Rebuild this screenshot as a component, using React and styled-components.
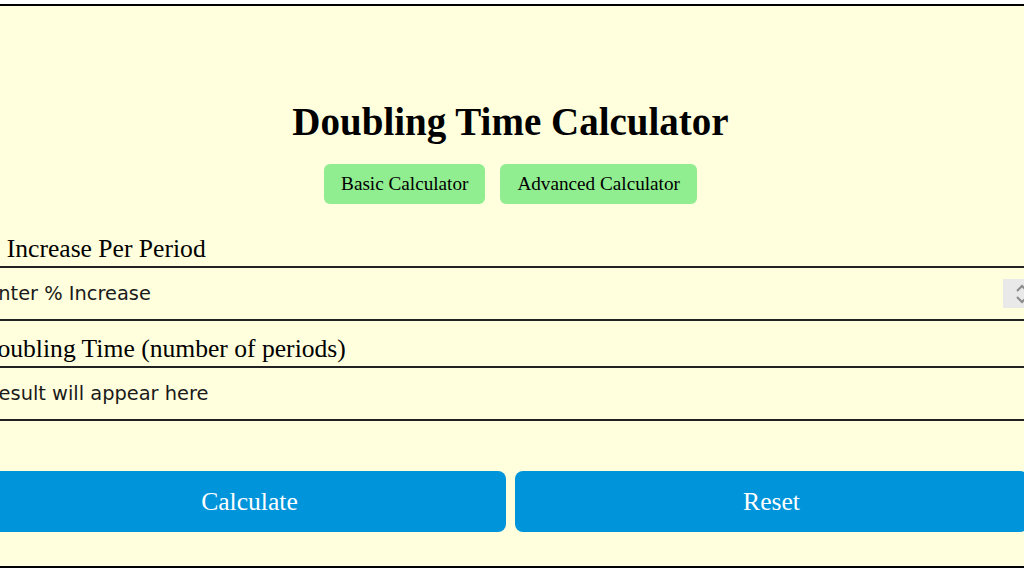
import React from "react";
import styled, { createGlobalStyle } from "styled-components";

const Global = createGlobalStyle`
  html, body { margin: 0; padding: 0; background: #ffffff; }
  body { overflow: hidden; }
  * { box-sizing: border-box; }
`;

const Viewport = styled.div`
  width: 1024px;
  height: 576px;
  overflow: hidden;
  background: #ffffff;
`;

const Card = styled.div`
  margin-top: 4px;
  margin-left: -21px;
  width: 1063px;
  background: #ffffdd;
  border: 2px solid #000;
  padding: 93px 0 34px;
  font-family: "Liberation Serif", "Times New Roman", serif;
  color: #000;
`;

const Title = styled.h1`
  margin: 0;
  text-align: center;
  font-size: 39px;
  line-height: 45px;
  font-weight: bold;
`;

const ModeRow = styled.div`
  display: flex;
  justify-content: center;
  gap: 15px;
  margin-top: 20px;
`;

const ModeButton = styled.button`
  font-family: "Liberation Serif", "Times New Roman", serif;
  font-size: 19.2px;
  line-height: 22px;
  padding: 9px 17px;
  border: none;
  border-radius: 6px;
  background: #90ee90;
  color: #000;
  cursor: pointer;
`;

const Form = styled.div`
  display: flex;
  flex-direction: column;
  gap: 13px;
  margin-top: 30px;
`;

const Field = styled.div`
  display: flex;
  flex-direction: column;
`;

const Label = styled.label`
  display: block;
  margin-left: -2px;
  font-size: 25.6px;
  line-height: 30px;
  margin-bottom: 2px;
`;

const chevrons =
  "data:image/svg+xml;utf8," +
  encodeURIComponent(
    '<svg xmlns="http://www.w3.org/2000/svg" width="14" height="22" viewBox="0 0 14 22"><path d="M2 8 L7 3 L12 8" fill="none" stroke="#8a8a8a" stroke-width="2"/><path d="M2 14 L7 19 L12 14" fill="none" stroke="#8a8a8a" stroke-width="2"/></svg>'
  );

const TextInput = styled.input`
  width: 100%;
  height: 55px;
  padding: 0 11px 0 5px;
  border: none;
  border-top: 2px solid #222;
  border-bottom: 2px solid #222;
  background: #ffffdd;
  font-family: "DejaVu Sans", Verdana, sans-serif;
  font-size: 19.4px;
  color: #000;
  outline: none;

  &::placeholder {
    color: #1a1a1a;
    opacity: 1;
  }

  &::-webkit-inner-spin-button {
    -webkit-appearance: none;
    appearance: none;
    opacity: 1;
    width: 26px;
    height: 29px;
    margin: 0;
    background: #e9e9ea url("${chevrons}") 12px center no-repeat;
  }
`;

const ActionRow = styled.div`
  display: grid;
  grid-template-columns: 1fr 1fr;
  gap: 9px;
  padding: 0 12px;
  margin-top: 50px;
`;

const ActionButton = styled.button`
  font-family: "Liberation Serif", "Times New Roman", serif;
  font-size: 25.6px;
  line-height: 29px;
  padding: 16px 0;
  border: none;
  border-radius: 8px;
  background: #0094da;
  color: #ffffff;
  cursor: pointer;
`;

export default function App() {
  return (
    <Viewport>
      <Global />
      <Card>
        <Title>Doubling Time Calculator</Title>
        <ModeRow>
          <ModeButton>Basic Calculator</ModeButton>
          <ModeButton>Advanced Calculator</ModeButton>
        </ModeRow>
        <Form>
          <Field>
            <Label htmlFor="inc">% Increase Per Period</Label>
            <TextInput id="inc" type="number" placeholder="Enter % Increase" />
          </Field>
          <Field>
            <Label htmlFor="res">Doubling Time (number of periods)</Label>
            <TextInput id="res" type="text" readOnly placeholder="Result will appear here" />
          </Field>
        </Form>
        <ActionRow>
          <ActionButton>Calculate</ActionButton>
          <ActionButton>Reset</ActionButton>
        </ActionRow>
      </Card>
    </Viewport>
  );
}
